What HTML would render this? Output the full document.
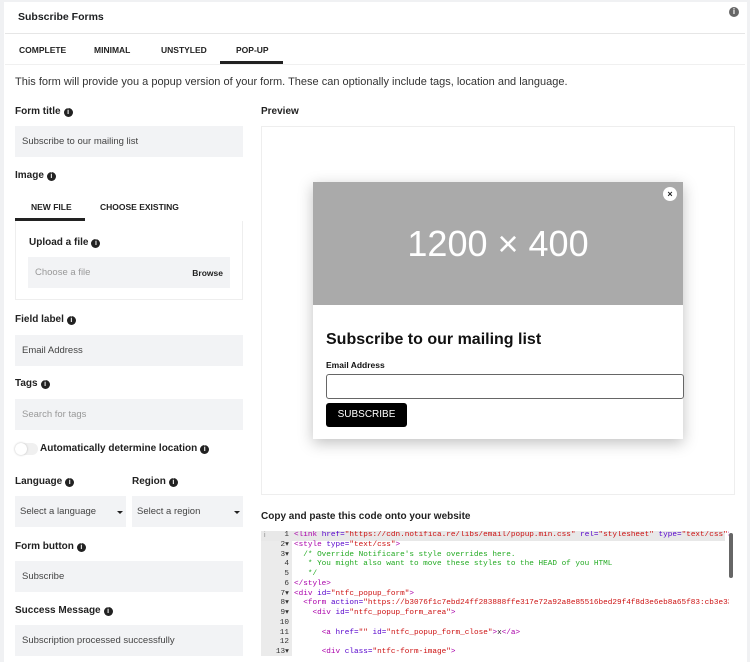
<!DOCTYPE html>
<html><head><meta charset="utf-8"><style>
*{box-sizing:border-box;margin:0;padding:0}
body{width:750px;height:656px;overflow:hidden;background:#f0f1f3;font-family:"Liberation Sans",Arial,sans-serif;color:#1d1f21;position:relative}
.card{position:absolute;left:4px;top:2px;width:743px;height:660px;background:#fff}
.a{position:absolute}
.b{font-weight:bold}
.lbl{position:absolute;font-size:10px;font-weight:bold;color:#222;line-height:12px;display:flex;align-items:center}
.i{display:inline-block;width:9px;height:9px;border-radius:50%;background:#222;color:#fff;font-size:7px;line-height:9px;text-align:center;margin-left:3px;font-weight:bold}
.in{position:absolute;background:#f2f3f5;font-size:9.5px;color:#444;padding-left:7px;display:flex;align-items:center}
.ph{color:#999}
.tab{position:absolute;font-size:8.5px;font-weight:bold;color:#222}
.code{position:absolute;left:294px;font-family:"Liberation Mono",monospace;font-size:7.7px;white-space:pre;line-height:9.75px}
.g{position:absolute;left:261px;width:28px;text-align:right;font-family:"Liberation Mono",monospace;font-size:7.7px;line-height:9.75px;color:#333}
.t{color:#a0a}.at{color:#50c}.s{color:#c11}.c{color:#2a2}
.caret{position:absolute;width:0;height:0;border-left:3px solid transparent;border-right:3px solid transparent;border-top:3px solid #222}
</style></head><body>
<div class="card"></div>
<div class="a b" style="left:18px;top:11px;font-size:10.5px">Subscribe Forms</div>
<div class="a" style="left:729px;top:7px;width:10px;height:10px;border-radius:50%;background:#666;color:#fff;font-size:8px;line-height:10px;text-align:center;font-weight:bold">i</div>
<div class="a" style="left:5px;top:33px;width:740px;height:1px;background:#e6e6e6"></div>
<div class="tab" style="left:19px;top:45px">COMPLETE</div>
<div class="tab" style="left:94px;top:45px">MINIMAL</div>
<div class="tab" style="left:161px;top:45px">UNSTYLED</div>
<div class="tab" style="left:236px;top:45px">POP-UP</div>
<div class="a" style="left:220px;top:61px;width:63px;height:3px;background:#222"></div>
<div class="a" style="left:5px;top:64px;width:740px;height:1px;background:#f0f0f0"></div>
<div class="a" style="left:15px;top:76px;font-size:11px;color:#333">This form will provide you a popup version of your form. These can optionally include tags, location and language.</div>

<div class="lbl" style="left:15px;top:106px">Form title<span class="i">i</span></div>
<div class="in" style="left:15px;top:126px;width:228px;height:31px">Subscribe to our mailing list</div>
<div class="lbl" style="left:15px;top:170px">Image<span class="i">i</span></div>
<div class="tab" style="left:31px;top:202px">NEW FILE</div>
<div class="tab" style="left:100px;top:202px">CHOOSE EXISTING</div>
<div class="a" style="left:15px;top:218px;width:70px;height:3px;background:#222"></div>
<div class="a" style="left:15px;top:221px;width:228px;height:79px;border:1px solid #eee;border-top:none"></div>
<div class="lbl" style="left:29px;top:237px">Upload a file<span class="i">i</span></div>
<div class="in" style="left:28px;top:257px;width:202px;height:31px"><span class="ph">Choose a file</span><span class="b" style="position:absolute;right:7px;font-size:8.5px;color:#222">Browse</span></div>
<div class="lbl" style="left:15px;top:314px">Field label<span class="i">i</span></div>
<div class="in" style="left:15px;top:335px;width:228px;height:31px">Email Address</div>
<div class="lbl" style="left:15px;top:378px">Tags<span class="i">i</span></div>
<div class="in" style="left:15px;top:399px;width:228px;height:31px"><span class="ph">Search for tags</span></div>
<div class="a" style="left:15px;top:443px;width:23px;height:12px;border-radius:6px;background:#f0f0f0"></div>
<div class="a" style="left:15px;top:443px;width:12px;height:12px;border-radius:50%;background:#fff;box-shadow:0 0 2px #bbb"></div>
<div class="lbl" style="left:40px;top:443px">Automatically determine location<span class="i">i</span></div>
<div class="lbl" style="left:15px;top:476px">Language<span class="i">i</span></div>
<div class="lbl" style="left:132px;top:476px">Region<span class="i">i</span></div>
<div class="in" style="left:15px;top:496px;width:111px;height:31px;padding-left:5px">Select a language</div>
<div class="caret" style="left:117px;top:511px"></div>
<div class="in" style="left:132px;top:496px;width:111px;height:31px;padding-left:5px">Select a region</div>
<div class="caret" style="left:234px;top:511px"></div>
<div class="lbl" style="left:15px;top:541px">Form button<span class="i">i</span></div>
<div class="in" style="left:15px;top:561px;width:228px;height:31px">Subscribe</div>
<div class="lbl" style="left:15px;top:605px">Success Message<span class="i">i</span></div>
<div class="in" style="left:15px;top:625px;width:228px;height:31px">Subscription processed successfully</div>

<div class="lbl" style="left:261px;top:106px">Preview</div>
<div class="a" style="left:261px;top:126px;width:474px;height:369px;border:1px solid #eee"></div>
<div class="a" style="left:313px;top:182px;width:370px;height:257px;background:#fff;box-shadow:0 4px 14px rgba(0,0,0,.25)"></div>
<div class="a" style="left:313px;top:182px;width:370px;height:123px;background:#aaa;color:#fff;font-size:36px;text-align:center;line-height:123px;font-family:'Liberation Sans',sans-serif;font-weight:normal">1200 × 400</div>
<div class="a" style="left:663px;top:187px;width:14px;height:14px;border-radius:50%;background:#fff;font-size:9px;line-height:14px;text-align:center;font-weight:bold">×</div>
<div class="a b" style="left:326px;top:331px;font-size:16px;color:#111">Subscribe to our mailing list</div>
<div class="a b" style="left:326px;top:360px;font-size:8.5px;color:#111">Email Address</div>
<div class="a" style="left:326px;top:374px;width:358px;height:25px;border:1px solid #666;border-radius:3px"></div>
<div class="a" style="left:326px;top:403px;width:81px;height:24px;background:#000;border-radius:3px;color:#fff;font-size:10px;text-align:center;line-height:24px">SUBSCRIBE</div>

<div class="lbl" style="left:261px;top:511px">Copy and paste this code onto your website</div>
<div class="a" style="left:261px;top:531px;width:474px;height:125px;background:#fff"></div>
<div class="a" style="left:261px;top:531px;width:31px;height:125px;background:#ebebeb"></div>
<div class="a" style="left:261px;top:531px;width:464px;height:10px;background:#e8e8e8"></div>
<div class="a" style="left:729px;top:533px;width:4px;height:45px;background:#666;border-radius:2px"></div>
<div class="g" style="top:531px">1<br>2▾<br>3▾<br>4<br>5<br>6<br>7▾<br>8▾<br>9▾<br>10<br>11<br>12<br>13▾</div>
<div class="a" style="left:264px;top:531px;font-size:7px;line-height:9.75px;color:#888">i</div>
<div class="code" style="top:531px;width:435px;overflow:hidden"><span class="t">&lt;link</span> <span class="at">href=</span><span class="s">"https://cdn.notifica.re/libs/email/popup.min.css"</span> <span class="at">rel=</span><span class="s">"stylesheet"</span> <span class="at">type=</span><span class="s">"text/css"</span><span class="t">&gt;</span>
<span class="t">&lt;style</span> <span class="at">type=</span><span class="s">"text/css"</span><span class="t">&gt;</span>
<span class="c">  /* Override Notificare's style overrides here.
   * You might also want to move these styles to the HEAD of you HTML
   */</span>
<span class="t">&lt;/style&gt;</span>
<span class="t">&lt;div</span> <span class="at">id=</span><span class="s">"ntfc_popup_form"</span><span class="t">&gt;</span>
  <span class="t">&lt;form</span> <span class="at">action=</span><span class="s">"https://b3076f1c7ebd24ff283888ffe317e72a92a8e85516bed29f4f8d3e6eb8a65f83:cb3e338f2</span>
    <span class="t">&lt;div</span> <span class="at">id=</span><span class="s">"ntfc_popup_form_area"</span><span class="t">&gt;</span>

      <span class="t">&lt;a</span> <span class="at">href=</span><span class="s">""</span> <span class="at">id=</span><span class="s">"ntfc_popup_form_close"</span><span class="t">&gt;</span>x<span class="t">&lt;/a&gt;</span>

      <span class="t">&lt;div</span> <span class="at">class=</span><span class="s">"ntfc-form-image"</span><span class="t">&gt;</span></div>
</body></html>
